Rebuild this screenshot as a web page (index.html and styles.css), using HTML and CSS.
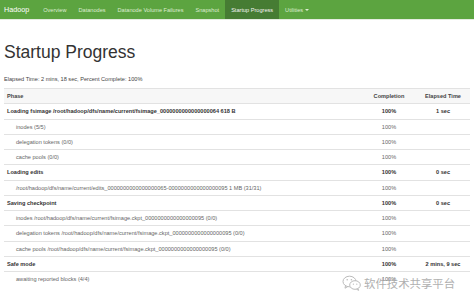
FILE: index.html
```html
<!DOCTYPE html>
<html>
<head>
    <title>Startup Progress</title>
    <link rel="stylesheet" href="styles.css">
</head>
<body>
    <div class="navbar">
        <div class="brand">Hadoop</div>
        <ul class="nav">
            <li>Overview</li>
            <li>Datanodes</li>
            <li>Datanode Volume Failures</li>
            <li>Snapshot</li>
            <li class="active">Startup Progress</li>
            <li>Utilities <span class="caret"></span></li>
        </ul>
    </div>

    <div class="container">
        <h1>Startup Progress</h1>
        <p class="elapsed">Elapsed Time: 2 mins, 18 sec, Percent Complete: 100%</p>

        <table class="progress">
            <thead>
                <tr>
                    <th class="phase-col">Phase</th>
                    <th class="num">Completion</th>
                    <th class="num">Elapsed Time</th>
                </tr>
            </thead>
            <tbody>
                <tr class="phase">
                    <td>Loading fsimage /root/hadoop/dfs/name/current/fsimage_0000000000000000064 618 B</td>
                    <td class="num">100%</td>
                    <td class="num">1 sec</td>
                </tr>
                <tr class="step">
                    <td>inodes (5/5)</td>
                    <td class="num">100%</td>
                    <td></td>
                </tr>
                <tr class="step">
                    <td>delegation tokens (0/0)</td>
                    <td class="num">100%</td>
                    <td></td>
                </tr>
                <tr class="step">
                    <td>cache pools (0/0)</td>
                    <td class="num">100%</td>
                    <td></td>
                </tr>
                <tr class="phase">
                    <td>Loading edits</td>
                    <td class="num">100%</td>
                    <td class="num">0 sec</td>
                </tr>
                <tr class="step">
                    <td>/root/hadoop/dfs/name/current/edits_0000000000000000065-0000000000000000095 1 MB (31/31)</td>
                    <td class="num">100%</td>
                    <td></td>
                </tr>
                <tr class="phase">
                    <td>Saving checkpoint</td>
                    <td class="num">100%</td>
                    <td class="num">0 sec</td>
                </tr>
                <tr class="step">
                    <td>inodes /root/hadoop/dfs/name/current/fsimage.ckpt_0000000000000000095 (0/0)</td>
                    <td class="num">100%</td>
                    <td></td>
                </tr>
                <tr class="step">
                    <td>delegation tokens /root/hadoop/dfs/name/current/fsimage.ckpt_0000000000000000095 (0/0)</td>
                    <td class="num">100%</td>
                    <td></td>
                </tr>
                <tr class="step">
                    <td>cache pools /root/hadoop/dfs/name/current/fsimage.ckpt_0000000000000000095 (0/0)</td>
                    <td class="num">100%</td>
                    <td></td>
                </tr>
                <tr class="phase">
                    <td>Safe mode</td>
                    <td class="num">100%</td>
                    <td class="num">2 mins, 9 sec</td>
                </tr>
                <tr class="step">
                    <td>awaiting reported blocks (4/4)</td>
                    <td class="num">100%</td>
                    <td></td>
                </tr>
            </tbody>
        </table>
    </div>

    <div class="watermark">
        <svg width="20" height="16" viewBox="0 0 20 16">
            <ellipse cx="7.5" cy="6.5" rx="6.5" ry="5.3" fill="none" stroke="#b5b5b5" stroke-width="1"/>
            <path d="M3.5 10.8 L3 13.2 L5.8 11.6" fill="none" stroke="#b5b5b5" stroke-width="1"/>
            <ellipse cx="13" cy="10" rx="5.3" ry="4.3" fill="#fff" stroke="#b5b5b5" stroke-width="1"/>
            <path d="M16 13.6 L16.6 15.4 L14.6 14.2" fill="none" stroke="#b5b5b5" stroke-width="1"/>
            <circle cx="5.2" cy="4.8" r="0.8" fill="#b5b5b5"/>
            <circle cx="9.4" cy="4.8" r="0.8" fill="#b5b5b5"/>
            <circle cx="11.4" cy="9.2" r="0.6" fill="#b5b5b5"/>
            <circle cx="14.8" cy="9.2" r="0.6" fill="#b5b5b5"/>
        </svg>
        <span>软件技术共享平台</span>
    </div>
</body>
</html>
```

FILE: styles.css
```css
body {
    margin: 0;
    font-family: "Liberation Sans", Arial, sans-serif;
    color: #333333;
    background-color: #ffffff;
}

.navbar {
    display: flex;
    align-items: stretch;
    height: 19px;
    background-color: #5ca440;
    border-bottom: 1px solid #e4ece0;
    padding-left: 4px;
}
.brand {
    display: flex;
    align-items: center;
    color: #ffffff;
    font-size: 7.2px;
    padding-right: 2px;
}
.nav {
    display: flex;
    list-style: none;
    margin: 0 0 0 6px;
    padding: 0;
}
.nav li {
    display: flex;
    align-items: center;
    padding: 0 6px;
    font-size: 5.6px;
    color: #dcedd2;
}
.nav li.active {
    background-color: #467c33;
    color: #f2f2f2;
}
.caret {
    display: inline-block;
    margin-left: 2px;
    border-top: 2px solid #dcedd2;
    border-left: 2px solid transparent;
    border-right: 2px solid transparent;
}

.container {
    padding: 0 4px;
}
h1 {
    font-size: 17.5px;
    font-weight: normal;
    line-height: 20px;
    margin: 22px 0 0;
}
.elapsed {
    font-size: 5.6px;
    line-height: 8px;
    margin: 13px 0 5px;
    color: #444444;
}

.progress {
    width: 466px;
    border-collapse: collapse;
    font-size: 5.6px;
}
.progress th,
.progress td {
    height: 14.25px;
    padding: 0 3px;
    border-top: 1px solid #e2e2e2;
    text-align: left;
    vertical-align: middle;
    line-height: 8px;
}
.progress thead th {
    background-color: #f7f7f7;
    font-weight: bold;
    color: #444444;
}
.progress .num {
    text-align: center;
}
.progress th.phase-col {
    width: 352px;
}
.progress th.num:nth-child(2) {
    width: 48px;
}
.progress tr.phase td {
    font-weight: bold;
    color: #333333;
}
.progress tr.step td {
    color: #666666;
}
.progress tr.step td:first-child {
    padding-left: 12px;
}

.watermark {
    position: absolute;
    left: 342px;
    top: 275px;
    display: flex;
    align-items: center;
    gap: 2px;
    color: #a8a8a8;
    font-family: "Noto Sans CJK SC", sans-serif;
    font-size: 11.4px;
    opacity: 0.9;
}
```
